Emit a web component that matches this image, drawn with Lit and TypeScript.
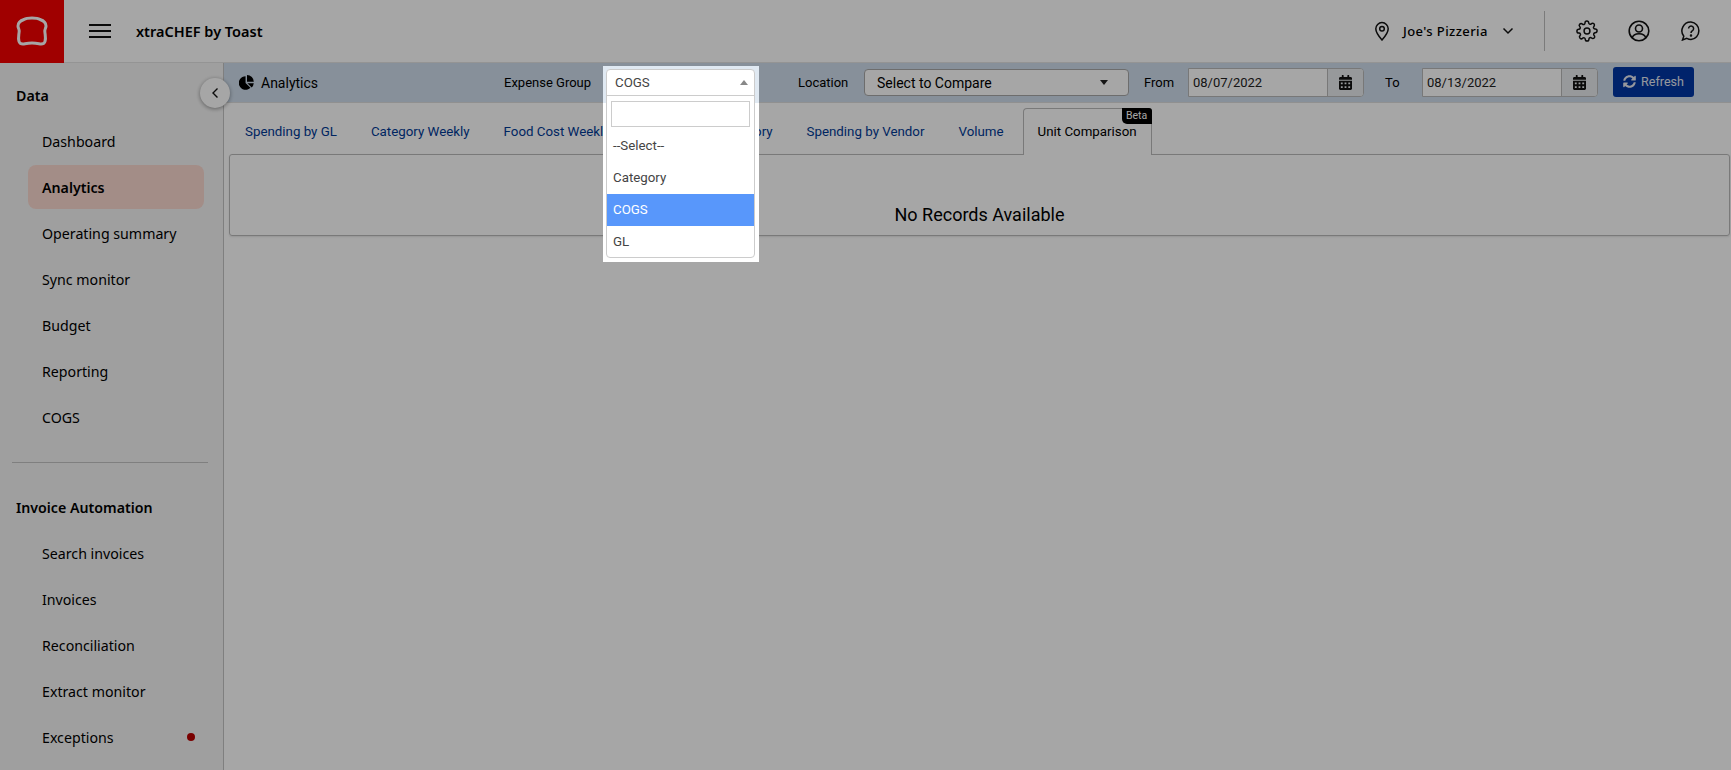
import { LitElement, html, css, svg } from "lit";
import { customElement } from "lit/decorators.js";

const dataItems = ["Dashboard", "Analytics", "Operating summary", "Sync monitor", "Budget", "Reporting", "COGS"];
const invoiceItems = ["Search invoices", "Invoices", "Reconciliation", "Extract monitor", "Exceptions"];
const tabs = ["Spending by GL", "Category Weekly", "Food Cost Weekly", "Spending by Category", "Spending by Vendor", "Volume"];

const calendar = svg`<svg class="cal" viewBox="0 0 448 512" width="13" height="15"><path fill="currentColor" d="M0 464c0 26.5 21.5 48 48 48h352c26.500 0 48-21.500 48-48V192H0v272zm320-196c0-6.600 5.400-12 12-12h40c6.600 0 12 5.400 12 12v40c0 6.600-5.400 12-12 12h-40c-6.600 0-12-5.400-12-12v-40zm0 128c0-6.600 5.400-12 12-12h40c6.600 0 12 5.400 12 12v40c0 6.600-5.400 12-12 12h-40c-6.600 0-12-5.400-12-12v-40zM192 268c0-6.600 5.400-12 12-12h40c6.600 0 12 5.400 12 12v40c0 6.600-5.400 12-12 12h-40c-6.600 0-12-5.400-12-12v-40zm0 128c0-6.600 5.400-12 12-12h40c6.600 0 12 5.400 12 12v40c0 6.600-5.400 12-12 12h-40c-6.600 0-12-5.400-12-12v-40zM64 268c0-6.600 5.400-12 12-12h40c6.600 0 12 5.400 12 12v40c0 6.600-5.400 12-12 12H76c-6.600 0-12-5.400-12-12v-40zm0 128c0-6.600 5.400-12 12-12h40c6.600 0 12 5.400 12 12v40c0 6.600-5.400 12-12 12H76c-6.600 0-12-5.400-12-12v-40zM400 64h-48V16c0-8.800-7.200-16-16-16h-32c-8.800 0-16 7.200-16 16v48H160V16c0-8.800-7.200-16-16-16h-32c-8.800 0-16 7.200-16 16v48H48C21.500 64 0 85.500 0 112v48h448v-48c0-26.500-21.500-48-48-48z"/></svg>`;

@customElement("app-root")
export class AppRoot extends LitElement {
  static styles = css`
    :host { display: block; position: relative; width: 1731px; height: 770px; overflow: hidden; background: #fff; color: #000; font-family: "Roboto", sans-serif; }
    * { box-sizing: border-box; }
    .top { height: 63px; display: flex; align-items: center; background: #fff; border-bottom: 1px solid #e4e4e4; }
    .logo { width: 64px; height: 63px; background: #f60000; display: flex; align-items: center; justify-content: center; flex: none; }
    .burger { margin-left: 25px; width: 22px; height: 14px; display: flex; flex-direction: column; justify-content: space-between; }
    .burger i { display: block; height: 1.6px; background: #111; }
    .title { margin-left: 25px; font: 600 14.5px "Noto Sans", sans-serif; color: #000; }
    .right { margin-left: auto; display: flex; align-items: center; }
    .store { margin-left: 12px; font: 500 13px "Noto Sans", sans-serif; letter-spacing: .4px; width: 99px; }
    .sep { width: 1px; height: 40px; background: #bdbdbd; margin: 0 31px 0 30px; }
    .ic { display: block; }
    .gap1 { margin-left: 30px; }
    .gap2 { margin-left: 31px; margin-right: 30px; }

    .body { display: grid; grid-template-columns: 224px 1fr; height: 707px; }
    .side { background: #f5f5f5; border-right: 1px solid #c4c4c4; padding: 10px 0 0 0; font-family: "Noto Sans", sans-serif; font-size: 14.2px; overflow: hidden; }
    .head { height: 45px; padding-left: 16px; display: flex; align-items: center; font-weight: 600; }
    .item { height: 46px; margin-left: 28px; margin-right: 19px; padding: 0 0 0 14px; display: flex; align-items: center; justify-content: space-between; }
    .item.on { background: #fbd9d0; border-radius: 8px; font-weight: 600; height: 44px; margin-top: 1px; margin-bottom: 1px; }
    .rule { height: 1px; background: #c4c4c4; margin: 22px 15px 22px 12px; }
    .dot { width: 8px; height: 8px; border-radius: 50%; background: #bb0000; margin-right: 9px; }

    .main { min-width: 0; }
    .bar { height: 40px; background: #d0deed; display: flex; align-items: center; font-size: 13px; border-bottom: 1px solid #ddd; padding-left: 15px; }
    .bar .name { font-size: 14px; margin-left: 7px; width: 243px; }
    .lab1 { width: 150px; }
    .lab2 { margin-left: 144px; width: 66px; }
    .cmp { width: 265px; height: 27px; background: #fff; border: 1px solid #a8a8a8; border-radius: 4px; display: flex; align-items: center; justify-content: space-between; padding: 0 20px 0 12px; font-size: 14px; }
    .caret { width: 0; height: 0; border-left: 4px solid transparent; border-right: 4px solid transparent; border-top: 5px solid #222; }
    .from { margin-left: 15px; width: 44px; }
    .to { margin-left: 21px; width: 37px; }
    .date { display: flex; height: 29px; width: 176px; border: 1px solid #b8b8b8; border-radius: 0 4px 4px 0; background: #fff; overflow: hidden; font-size: 13px; color: #222; }
    .date span { width: 138px; padding-left: 4px; display: flex; align-items: center; }
    .date b { flex: 1; background: #e9ecef; border-left: 1px solid #b8b8b8; display: flex; align-items: center; justify-content: center; color: #111; }
    .btn { margin-left: 15px; width: 81px; height: 30px; background: #0037a5; border-radius: 3px; color: #e6e9f2; font-size: 12.500px; display: flex; align-items: center; justify-content: center; gap: 5px; margin-top: -2px; }

    .tabs { display: flex; height: 52px; margin-left: 6px; padding-top: 5px; gap: 4px; font-size: 13.32px; align-items: stretch; }
    .tab { padding: 0 15px 0; color: #003a96; display: flex; align-items: center; }
    .tab.on { position: relative; color: #000; border: 1px solid #bbb; border-bottom: 0; border-radius: 4px 4px 0 0; background: #fff; z-index: 1; height: 47px; padding: 0 14px 2px; }
    .beta { position: absolute; top: -1px; right: -1px; width: 30px; height: 16px; background: #000; color: #fff; font-size: 10.5px; line-height: 15px; text-align: center; border-radius: 0 3px 0 5px; }
    .panel { margin: -1px 1px 0 5px; height: 82px; border: 1px solid #bbb; border-radius: 3px; display: flex; align-items: flex-end; justify-content: center; padding-bottom: 8px; font-size: 18px; box-shadow: 0 1px 2px rgba(0,0,0,.1); }
    .panel span { line-height: 24px; }

    .toggle { position: absolute; left: 200px; top: 78px; width: 30px; height: 30px; border-radius: 50%; background: #fff; box-shadow: 0 1px 4px rgba(0,0,0,.4); display: flex; align-items: center; justify-content: center; z-index: 2; }

    .hole { position: absolute; left: 603px; top: 66px; width: 156px; height: 196px; background: linear-gradient(#e0e9f2 37px, #fff 37px); box-shadow: 0 0 0 2000px rgba(0,0,0,.35); z-index: 5; padding: 3px 4px 4px 3px; }
    .dd { font-size: 13.3px; color: #444; background: #fff; border: 1px solid #ccc; border-radius: 4px; height: 100%; overflow: hidden; display: flex; flex-direction: column; }
    .sel { height: 26px; flex: none; border-bottom: 1px solid #ccc; display: flex; align-items: center; justify-content: space-between; padding: 0 6px 0 8px; font-size: 13.3px; }
    .up { width: 0; height: 0; border-left: 4px solid transparent; border-right: 4px solid transparent; border-bottom: 5px solid #888; }
    .search { height: 26px; margin: 5px 4px 3px 4px; border: 1px solid #ccc; flex: none; }
    .opt { height: 32px; flex: none; padding: 0 0 1px 6px; display: flex; align-items: center; }
    .opt.on { background: #5897fb; color: #fff; }
  `;

  render() {
    return html`
      <div class="top">
        <div class="logo">
          <svg width="34" height="34" viewBox="0 0 34 34"><path fill="none" stroke="#fff" stroke-width="3" d="M9 5.500C12 3.500 22 3.500 25 5.500C28 6.500 31 8.500 31 12C31 14 29.800 15 29.800 17C30 21 31.200 24 30 27.500C29 30 27 30.500 24 29.800C20 29 14 29 10 29.800C7 30.500 5 30 4 27.500C2.800 24 4 21 4.200 17C4.200 15 3 14 3 12C3 8.500 6 6.500 9 5.500Z"/></svg>
        </div>
        <div class="burger"><i></i><i></i><i></i></div>
        <div class="title">xtraCHEF by Toast</div>
        <div class="right">
          <svg class="ic" width="18" height="20" viewBox="0 0 18 20" fill="none" stroke="#111" stroke-width="1.5"><path d="M9 19C5 14.500 2.800 11.500 2.800 7.800A6.200 6.200 0 0 1 15.200 7.800C15.200 11.500 13 14.500 9 19Z"/><circle cx="9" cy="7.800" r="2.300"/></svg>
          <div class="store">Joe's Pizzeria</div>
          <svg class="ic" width="12" height="8" viewBox="0 0 12 8" fill="none" stroke="#111" stroke-width="1.5"><path d="M1.500 1.500L6 6L10.500 1.500"/></svg>
          <div class="sep"></div>
          <svg class="ic" width="22" height="22" viewBox="0 0 24 24" fill="none" stroke="#111" stroke-width="1.6" stroke-linejoin="round"><circle cx="12" cy="12" r="3.200"/><path d="M19.400 15a1.650 1.650 0 0 0 .33 1.820l.06.06a2 2 0 1 1-2.830 2.830l-.06-.06a1.650 1.650 0 0 0-2.800 1.170V21a2 2 0 0 1-4 0v-.09a1.650 1.650 0 0 0-2.800-1.110l-.06.06a2 2 0 1 1-2.830-2.830l.06-.06a1.650 1.650 0 0 0-1.170-2.800H3a2 2 0 0 1 0-4h.09a1.650 1.650 0 0 0 1.110-2.800l-.06-.06a2 2 0 1 1 2.830-2.830l.06.06a1.650 1.650 0 0 0 2.800-1.170V3a2 2 0 0 1 4 0v.09a1.650 1.650 0 0 0 2.800 1.110l.06-.06a2 2 0 1 1 2.830 2.830l-.06.06a1.650 1.650 0 0 0 1.170 2.800H21a2 2 0 0 1 0 4h-.09a1.650 1.650 0 0 0-1.510 1z"/></svg>
          <svg class="ic gap1" width="22" height="22" viewBox="0 0 22 22" fill="none" stroke="#111" stroke-width="1.600"><circle cx="11" cy="11" r="9.800"/><circle cx="11" cy="8.500" r="3.500"/><path d="M4.200 18C5 14.800 8 13.800 11 13.800S17 14.800 17.800 18"/></svg>
          <svg class="ic gap2" width="20" height="20" viewBox="0 0 20 20" fill="none" stroke="#111" stroke-width="1.500"><path d="M10 1A8.800 8.800 0 0 1 10 18.500C8.500 18.500 7 18 5.800 17.400L1.500 19L2.800 15.200A8.800 8.800 0 0 1 10 1Z"/><path d="M7.600 7.500A2.500 2.500 0 1 1 11.500 9.600C10.500 10.200 10 10.800 10 12"/><circle cx="10" cy="14.500" r=".5" fill="#111"/></svg>
        </div>
      </div>
      <div class="body">
        <nav class="side">
          <div class="head">Data</div>
          ${dataItems.map((t) => html`<div class="item ${t === "Analytics" ? "on" : ""}">${t}</div>`)}
          <div class="rule"></div>
          <div class="head">Invoice Automation</div>
          ${invoiceItems.map((t) => html`<div class="item"><span>${t}</span>${t === "Exceptions" ? html`<span class="dot"></span>` : ""}</div>`)}
        </nav>
        <main class="main">
          <div class="bar">
            <svg width="15" height="15" viewBox="0 0 16 16"><path fill="#000" d="M7 1.200V8.500L12.200 13.700A7.300 7.300 0 1 1 7 1.200Z"/><path fill="#000" d="M8.500 0A7.300 7.300 0 0 1 15.800 7.300H8.500Z"/><path fill="#000" d="M9 8.800H15.800A7.300 7.300 0 0 1 13.500 13.300Z"/></svg>
            <span class="name">Analytics</span>
            <span class="lab1">Expense Group</span>
            <span class="lab2">Location</span>
            <div class="cmp"><span>Select to Compare</span><span class="caret"></span></div>
            <span class="from">From</span>
            <div class="date"><span>08/07/2022</span><b>${calendar}</b></div>
            <span class="to">To</span>
            <div class="date"><span>08/13/2022</span><b>${calendar}</b></div>
            <div class="btn">
              <svg width="13" height="13" viewBox="0 0 512 512"><path fill="currentColor" d="M370.720 133.280C339.458 104.008 298.888 87.962 255.848 88c-77.458.068-144.328 53.178-162.791 126.850-1.344 5.363-6.122 9.150-11.651 9.150H24.103c-7.498 0-13.194-6.807-11.807-14.176C33.933 94.924 134.813 8 256 8c66.448 0 126.791 26.136 171.315 68.685L463.030 40.970C478.149 25.851 504 36.559 504 57.941V192c0 13.255-10.745 24-24 24H345.941c-21.382 0-32.090-25.851-16.971-40.971l41.750-41.749zM32 296h134.059c21.382 0 32.090 25.851 16.971 40.971l-41.750 41.750c31.262 29.273 71.835 45.319 114.876 45.280 77.418-.070 144.315-53.144 162.787-126.849 1.344-5.363 6.122-9.150 11.651-9.150h57.304c7.498 0 13.194 6.807 11.807 14.176C478.067 417.076 377.187 504 256 504c-66.448 0-126.791-26.136-171.315-68.685L48.970 471.030C33.851 486.149 8 475.441 8 454.059V320c0-13.255 10.745-24 24-24z"/></svg>
              Refresh
            </div>
          </div>
          <div class="tabs">
            ${tabs.map((t) => html`<div class="tab">${t}</div>`)}
            <div class="tab on">Unit Comparison<span class="beta">Beta</span></div>
          </div>
          <div class="panel"><span>No Records Available</span></div>
        </main>
      </div>
      <div class="toggle"><svg width="8" height="12" viewBox="0 0 8 12" fill="none" stroke="#111" stroke-width="1.400"><path d="M6.500 1.500L2 6L6.500 10.500"/></svg></div>
      <div class="hole">
        <div class="dd">
          <div class="sel"><span>COGS</span><span class="up"></span></div>
          <div class="search"></div>
          <div class="opt">--Select--</div>
          <div class="opt">Category</div>
          <div class="opt on">COGS</div>
          <div class="opt">GL</div>
        </div>
      </div>
    `;
  }
}
